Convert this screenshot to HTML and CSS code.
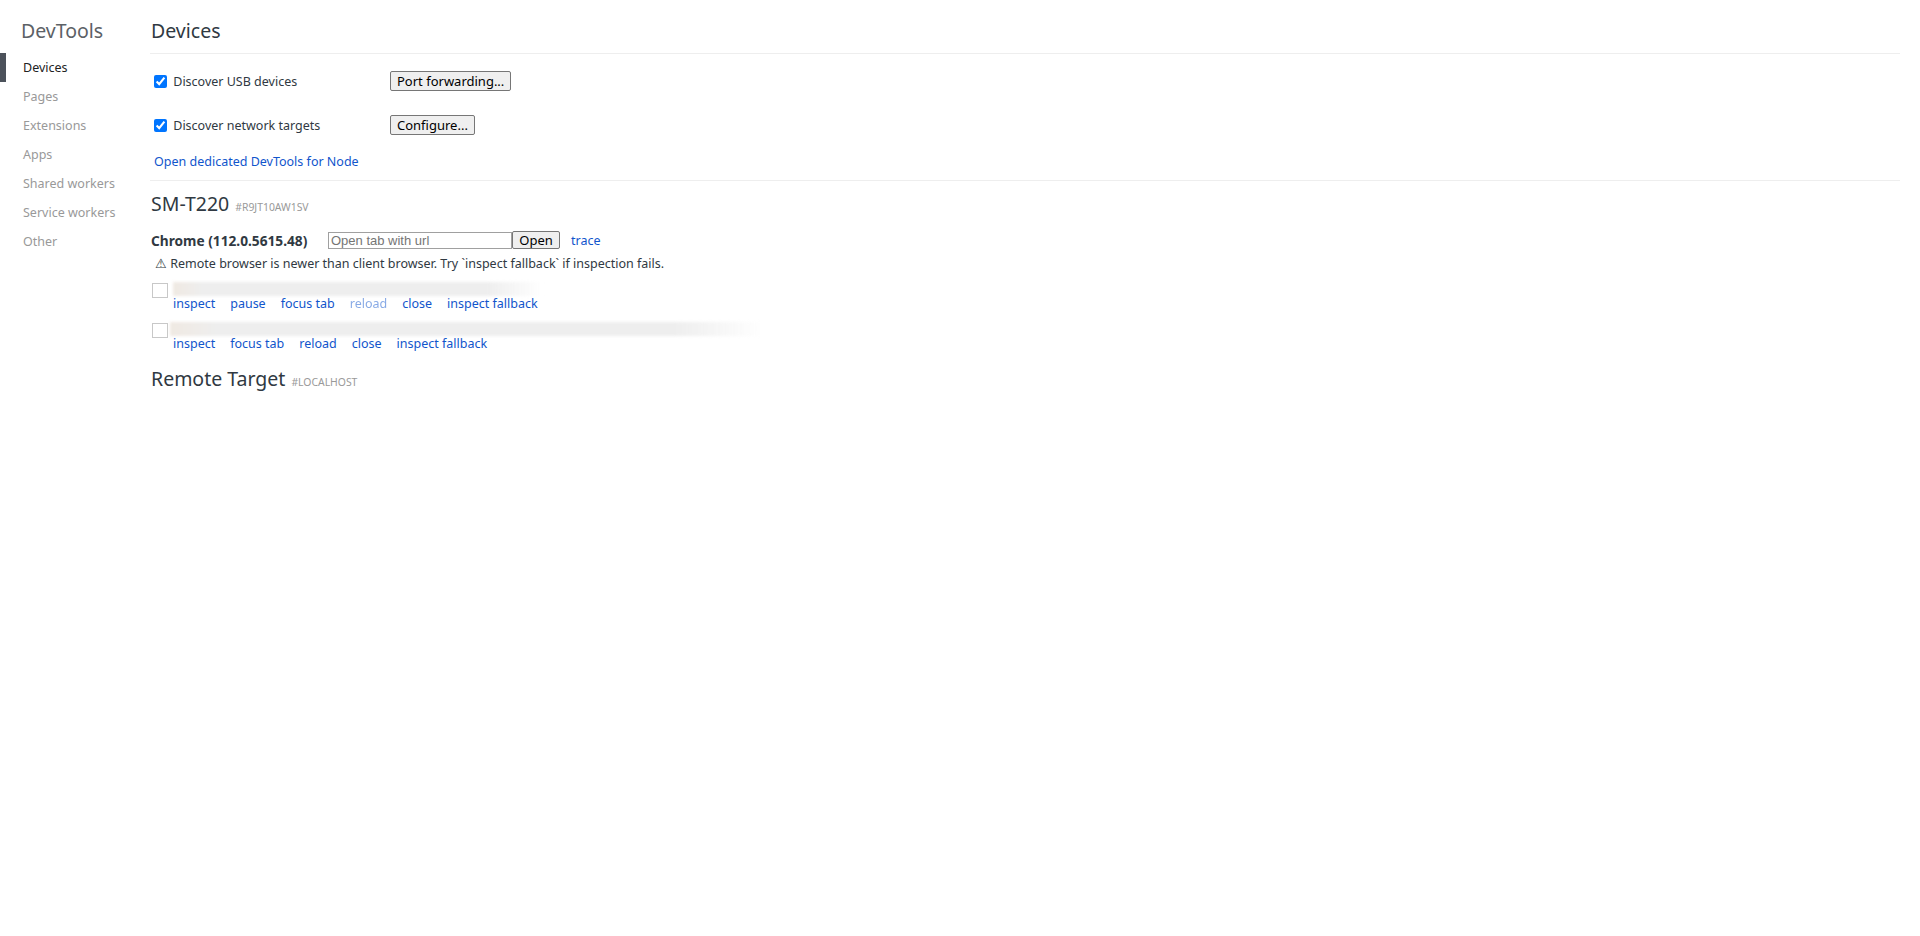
FILE: index.html
```html
<!DOCTYPE html>
<html lang="en">
<head>
    <meta charset="UTF-8">
    <title>Inspect with Chrome Developer Tools</title>
    <link rel="stylesheet" href="styles.css">
</head>
<body>
    <!-- left navigation -->
    <div class="sidebar">
        <h1 class="sidebar-title">DevTools</h1>
        <ul class="nav">
            <li class="nav-item selected">Devices</li>
            <li class="nav-item">Pages</li>
            <li class="nav-item">Extensions</li>
            <li class="nav-item">Apps</li>
            <li class="nav-item">Shared workers</li>
            <li class="nav-item">Service workers</li>
            <li class="nav-item">Other</li>
        </ul>
    </div>

    <!-- devices panel -->
    <div class="main">
        <h2 class="content-header">Devices</h2>

        <div class="settings">
            <div class="option-row">
                <label class="option"><input type="checkbox" checked> Discover USB devices</label>
                <button class="btn">Port forwarding...</button>
            </div>
            <div class="option-row second">
                <label class="option"><input type="checkbox" checked> Discover network targets</label>
                <button class="btn">Configure...</button>
            </div>
            <a class="node-link">Open dedicated DevTools for Node</a>
        </div>

        <div class="device">
            <div class="device-header">
                <span class="device-name">SM-T220</span>
                <span class="device-serial">#R9JT10AW1SV</span>
            </div>
            <div class="browser-header">
                <span class="browser-name">Chrome (112.0.5615.48)</span>
                <input class="open-input" type="text" placeholder="Open tab with url">
                <button class="btn open-btn">Open</button>
                <a class="action trace">trace</a>
            </div>
            <div class="warning">⚠ Remote browser is newer than client browser. Try `inspect fallback` if inspection fails.</div>

            <div class="row">
                <div class="favicon"></div>
                <div class="subrow-box">
                    <div class="blurred short"></div>
                    <div class="actions">
                        <a class="action">inspect</a>
                        <a class="action">pause</a>
                        <a class="action">focus tab</a>
                        <a class="action disabled">reload</a>
                        <a class="action">close</a>
                        <a class="action">inspect fallback</a>
                    </div>
                </div>
            </div>
            <div class="row">
                <div class="favicon"></div>
                <div class="subrow-box">
                    <div class="blurred long"></div>
                    <div class="actions">
                        <a class="action">inspect</a>
                        <a class="action">focus tab</a>
                        <a class="action">reload</a>
                        <a class="action">close</a>
                        <a class="action">inspect fallback</a>
                    </div>
                </div>
            </div>
        </div>

        <div class="device-header remote">
            <span class="device-name">Remote Target</span>
            <span class="device-serial">#LOCALHOST</span>
        </div>
    </div>
</body>
</html>
```

FILE: styles.css
```css
* {
    box-sizing: border-box;
}

body {
    margin: 0;
    display: flex;
    font-family: "Noto Sans", sans-serif;
    font-size: 12.5px;
    color: #303942;
    background: #fff;
}

/* sidebar */
.sidebar {
    width: 150px;
    flex-shrink: 0;
}

.sidebar-title {
    margin: 0;
    padding: 19px 0 0 21px;
    height: 53px;
    line-height: 24px;
    font-size: 19.5px;
    font-weight: normal;
    color: #5c6166;
}

.nav {
    list-style: none;
    margin: 0;
    padding: 0;
}

.nav-item {
    height: 29px;
    line-height: 29px;
    padding-left: 23px;
    color: #999;
}

.nav-item.selected {
    border-left: 6px solid #4c525b;
    padding-left: 17px;
    color: #222;
}

/* main panel */
.main {
    flex: 1;
    margin-right: 20px;
}

.content-header {
    margin: 0;
    padding: 19px 0 10px 1px;
    line-height: 24px;
    font-size: 19.5px;
    font-weight: normal;
    color: #303942;
    border-bottom: 1px solid #eee;
}

.settings {
    padding: 17px 0 10px;
    border-bottom: 1px solid #eee;
}

.option-row {
    display: flex;
    align-items: center;
    height: 20px;
}

.option-row.second {
    margin-top: 24px;
}

.option {
    display: flex;
    align-items: center;
    width: 240px;
    white-space: pre;
}

.option input {
    margin: 0 3px 0 4px;
    width: 13px;
    height: 13px;
}

.btn {
    font-family: "Noto Sans", sans-serif;
    font-size: 13px;
    line-height: 16px;
    height: 20px;
    padding: 0 6px;
    background: #efefef;
    border: 1px solid #767676;
    border-radius: 2px;
    color: #000;
}

.node-link {
    display: block;
    margin-top: 19px;
    padding-left: 4px;
    line-height: 16px;
    color: #1155cc;
    cursor: pointer;
}

/* device section */
.device-header {
    display: flex;
    align-items: baseline;
    margin-top: 11px;
    padding-left: 1px;
    line-height: 24px;
}

.device-name {
    font-size: 19.5px;
}

.device-serial {
    margin-left: 6px;
    font-size: 10.4px;
    color: #999;
}

.browser-header {
    display: flex;
    align-items: center;
    margin-top: 12px;
    height: 18px;
    padding-left: 1px;
}

.browser-name {
    width: 177px;
    font-size: 13.7px;
    font-weight: bold;
}

.open-input {
    width: 184px;
    height: 17px;
    padding: 0 2px;
    border: 1px solid #a0a0a0;
    border-radius: 0;
    font-family: "Liberation Sans", Arial, sans-serif;
    font-size: 13px;
}

.open-input::placeholder {
    color: #757575;
}

.open-btn {
    height: 18px;
    width: 48px;
    padding: 0;
}

.trace {
    margin-left: 11px;
}

.warning {
    margin-top: 7px;
    padding-left: 5px;
    line-height: 16px;
}

.row {
    display: flex;
    margin-top: 10px;
}

.favicon {
    width: 16px;
    height: 15px;
    margin: 1px 0 0 2px;
    border: 1px solid #c8c8c8;
    flex-shrink: 0;
}

.subrow-box {
    margin-left: 5px;
}

/* page titles are blurred in the capture */
.blurred {
    height: 14px;
    background: linear-gradient(90deg, #efe9e2, #eeeeee 8%, #eeeeee 85%, rgba(238, 238, 238, 0));
    filter: blur(1.5px);
}

.blurred.short {
    width: 370px;
}

.blurred.long {
    width: 593px;
    margin-left: -3px;
}

.actions {
    display: flex;
    line-height: 16px;
}

.action {
    margin-right: 15px;
    color: #1155cc;
    cursor: pointer;
}

.action.disabled {
    opacity: 0.5;
}

.device-header.remote {
    margin-top: 15px;
}
```
